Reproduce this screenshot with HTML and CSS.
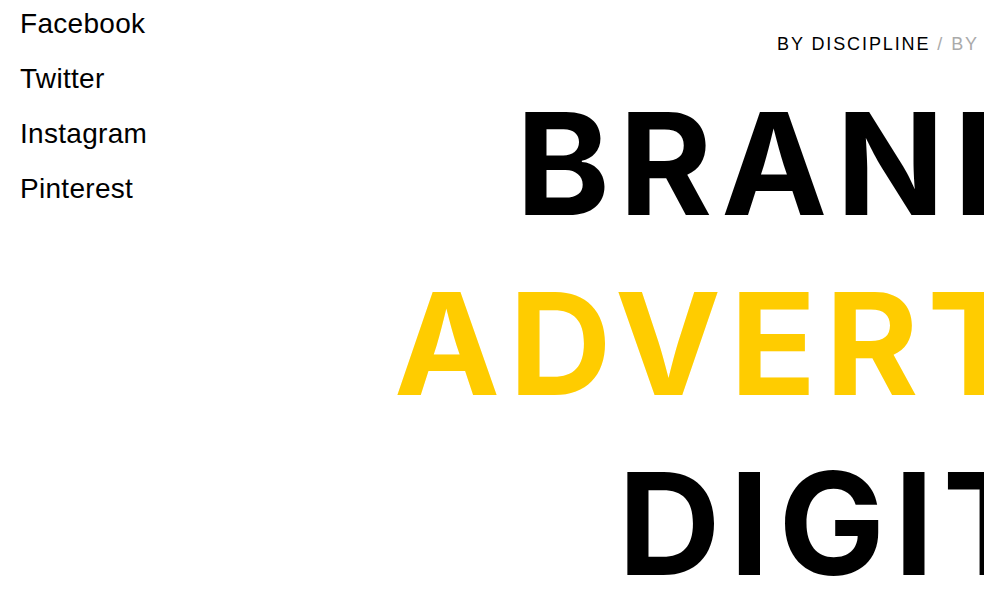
FILE: index.html
```html
<!DOCTYPE html>
<html lang="en">
<head>
<meta charset="utf-8">
<title>Work</title>
<link rel="stylesheet" href="styles.css">
</head>
<body>
<div class="page">
  <nav class="social">
    <a href="#">Facebook</a>
    <a href="#">Twitter</a>
    <a href="#">Instagram</a>
    <a href="#">Pinterest</a>
  </nav>
  <main class="work">
    <div class="filter"><span class="on">BY DISCIPLINE</span> <span class="off">/ BY</span></div>
    <div class="words">
      <div class="word w1">BRANDING</div>
      <div class="word w2 yellow">ADVERTISING</div>
      <div class="word w3">DIGITAL</div>
    </div>
  </main>
</div>
</body>
</html>
```
FILE: styles.css
```css
* { box-sizing: border-box; }
html, body {
  margin: 0;
  padding: 0;
  background: #fff;
  overflow: hidden;
}
.page {
  width: 984px;
  height: 590px;
  display: flex;
  overflow: hidden;
  color: #000;
}
.social {
  flex: 0 0 300px;
  display: flex;
  flex-direction: column;
  padding-left: 20px;
  margin-top: -4px;
  font-family: "Liberation Sans", Arial, sans-serif;
}
.social a {
  color: #000;
  text-decoration: none;
  font-size: 28px;
  line-height: 55px;
  letter-spacing: 0.3px;
}
.work {
  flex: 1;
  overflow: hidden;
  padding-top: 32px;
  min-width: 0;
}
.filter {
  font-family: "Liberation Sans", Arial, sans-serif;
  font-size: 18px;
  line-height: 24px;
  padding-left: 477px;
  white-space: nowrap;
  letter-spacing: 1.9px;
}
.filter .off { color: #aaa; }
.words {
  margin-top: 17px;
  display: flex;
  flex-direction: column;
  font-family: Inter, "Noto Sans", sans-serif;
}
.word {
  font-size: 142px;
  line-height: 180px;
  font-weight: 700;
  letter-spacing: 9px;
  white-space: nowrap;
}
.w1 { padding-left: 216px; }
.w2 { padding-left: 94px; }
.w3 { padding-left: 318px; }
.yellow { color: #ffcc00; }
```
